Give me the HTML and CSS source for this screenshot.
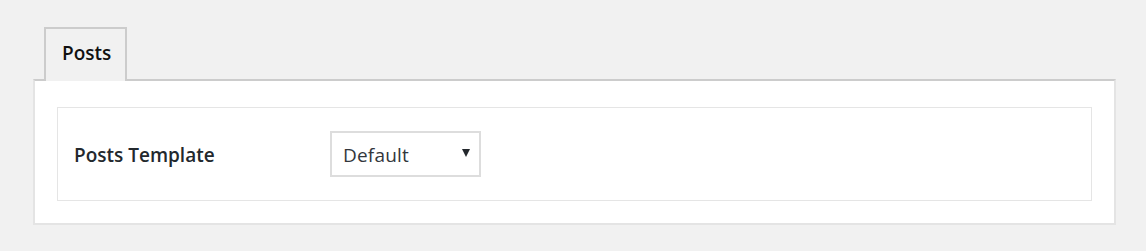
FILE: index.html
```html
<!DOCTYPE html>
<html lang="en">
<head>
  <meta charset="UTF-8" />
  <title>Posts settings</title>
  <link rel="stylesheet" href="styles.css">
</head>
<body>

<div class="wrap">
  <div class="tabs">
    <div class="tab active">Posts</div>
  </div>

  <div class="panel">
    <div class="field-row">
      <label class="field-label" for="postsTemplate">Posts Template</label>
      <div class="select-box">
        <select id="postsTemplate">
          <option>Default</option>
          <option>Grid</option>
          <option>List</option>
        </select>
        <span class="arrow"></span>
      </div>
    </div>
  </div>
</div>

</body>
</html>
```

FILE: styles.css
```css
body {
  margin: 0;
  background: #f1f1f1;
  font-family: "Open Sans", "Noto Sans", sans-serif;
  color: #23282d;
}
.wrap {
  padding: 27px 30px 0 33px;
}
.tabs {
  display: flex;
  padding-left: 11px;
  margin-bottom: -2px;
  position: relative;
  z-index: 1;
}
.tab {
  height: 52px;
  box-sizing: border-box;
  width: 83px;
  padding: 12px 0 0 16px;
  background: #f1f1f1;
  border: 2px solid #ccc;
  border-bottom: none;
  font-size: 19px;
  font-weight: 600;
  line-height: 24px;
  color: #111;
}
.tab.active {
  height: 54px;
}
.panel {
  background: #fff;
  border: 2px solid #e4e4e4;
  border-top-color: #ccc;
  padding: 26px 22px 22px;
}
.field-row {
  display: flex;
  align-items: center;
  height: 92px;
  border: 1px solid #e5e5e5;
  padding-left: 16px;
}
.field-label {
  width: 256px;
  font-size: 19px;
  font-weight: 600;
  padding-top: 1px;
}
.select-box {
  position: relative;
  width: 151px;
  height: 46px;
}
.select-box select {
  width: 100%;
  height: 100%;
  box-sizing: border-box;
  border: 2px solid #ddd;
  background: #fff;
  -webkit-appearance: none;
  appearance: none;
  padding: 1px 0 0 11px;
  font-family: "Open Sans", "Noto Sans", sans-serif;
  font-size: 19px;
  letter-spacing: 0.2px;
  color: #32373c;
  outline: none;
}
.arrow {
  position: absolute;
  right: 11px;
  top: 18px;
  width: 0;
  height: 0;
  border-left: 4.5px solid transparent;
  border-right: 4.5px solid transparent;
  border-top: 8px solid #23282d;
  pointer-events: none;
}
```
